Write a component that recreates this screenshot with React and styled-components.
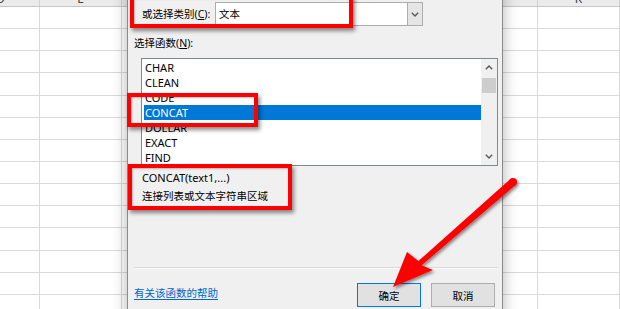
import React from "react";
import styled, { createGlobalStyle } from "styled-components";

const Global = createGlobalStyle`
  html, body { margin: 0; padding: 0; background: #fff; }
  body { font-family: "Noto Sans", "Noto Sans CJK SC", sans-serif; }
`;

const COLS = "40px 82px repeat(5, 83.2px) 1fr";

const Page = styled.div`
  position: relative;
  width: 620px;
  height: 309px;
  overflow: hidden;
  background: #fff;
  font-family: "Noto Sans", "Noto Sans CJK SC", sans-serif;
  color: #000;
`;

const Sheet = styled.div`
  display: flex;
  flex-direction: column;
`;

const HeaderRow = styled.div`
  display: grid;
  grid-template-columns: ${COLS};
  height: 15px;
  margin-top: -9px;
  background: #ebebeb;
  border-bottom: 1px solid #c6c6c6;
`;

const HeaderCell = styled.div`
  border-right: 1px solid #d2d2d2;
  font-size: 12px;
  line-height: 15px;
  color: #444;
  text-align: ${(p) => (p.$first ? "left" : "center")};
  text-indent: ${(p) => (p.$first ? "-4px" : "0")};
  overflow: hidden;
`;

const Row = styled.div`
  display: grid;
  grid-template-columns: ${COLS};
  height: 22.15px;
  box-sizing: border-box;
  border-bottom: 1px solid #dadada;
`;

const Cell = styled.div`
  border-right: 1px solid #dadada;
`;

const Dialog = styled.div`
  position: absolute;
  left: 127px;
  top: -10px;
  width: 376px;
  height: 340px;
  box-sizing: border-box;
  padding-top: 11px;
  background: #f0f0f0;
  border: 1px solid #8a8a8a;
  box-shadow: 0 0 14px rgba(0, 0, 0, 0.3);
  display: flex;
  flex-direction: column;
`;

const CategoryRow = styled.div`
  display: flex;
  align-items: center;
  height: 24px;
  padding-left: 14px;
`;

const CatLabel = styled.div`
  width: 73px;
  font-size: 10.5px;
  line-height: 14px;
  white-space: nowrap;
`;

const U = styled.span`
  text-decoration: underline;
  text-underline-offset: 1px;
`;

const Combo = styled.div`
  width: 208px;
  height: 24px;
  box-sizing: border-box;
  border: 1px solid #acacac;
  background: #fff;
  display: flex;
`;

const ComboText = styled.div`
  flex: 1;
  padding-left: 3px;
  font-size: 10.5px;
  line-height: 22px;
`;

const ComboButton = styled.div`
  width: 15px;
  box-sizing: border-box;
  border-left: 1px solid #adadad;
  background: #e5e5e5;
  display: flex;
  align-items: center;
  justify-content: center;
`;

const FuncLabel = styled.div`
  margin: 10px 0 0 6px;
  font-size: 10.5px;
  line-height: 14px;
`;

const ListBox = styled.div`
  margin: 8px 0 0 13px;
  width: 357px;
  height: 108px;
  box-sizing: border-box;
  border: 1px solid #828790;
  background: #fff;
  display: flex;
`;

const Items = styled.div`
  flex: 1;
  padding: 1px 0 0 2px;
  overflow: hidden;
`;

const Item = styled.div`
  height: 15px;
  line-height: 15px;
  padding-left: 1px;
  font-size: 11px;
  background: ${(p) => (p.$selected ? "#0078d7" : "transparent")};
  color: ${(p) => (p.$selected ? "#fff" : "#000")};
`;

const Scrollbar = styled.div`
  width: 16px;
  background: #f0f0f0;
  display: flex;
  flex-direction: column;
`;

const ScrollArrow = styled.div`
  height: 17px;
  display: flex;
  align-items: center;
  justify-content: center;
`;

const ScrollTrack = styled.div`
  flex: 1;
  padding: 2px 1px 0;
`;

const Thumb = styled.div`
  height: 15px;
  background: #cdcdcd;
`;

const Description = styled.div`
  margin-top: 2px;
  padding-left: 14px;
`;

const DescLine = styled.div`
  line-height: 19px;
  font-size: ${(p) => (p.$cjk ? "10.5px" : "11px")};
  white-space: nowrap;
`;

const Separator = styled.div`
  margin: 61px 0 0 6px;
  width: 364px;
  border-top: 1px solid #d9d9d9;
  border-bottom: 1px solid #fbfbfb;
`;

const Footer = styled.div`
  margin-top: 14px;
  padding: 0 7px 0 6px;
  display: flex;
  justify-content: space-between;
  align-items: flex-start;
`;

const HelpLink = styled.a`
  font-size: 10.5px;
  line-height: 20px;
  color: #0066cc;
  text-decoration: underline;
  text-underline-offset: 2px;
`;

const Buttons = styled.div`
  display: flex;
  gap: 10px;
`;

const Button = styled.div`
  width: 64px;
  height: 24px;
  box-sizing: border-box;
  background: #e1e1e1;
  border: 1px solid ${(p) => (p.$default ? "#0078d7" : "#adadad")};
  display: flex;
  align-items: center;
  justify-content: center;
  font-size: 10.5px;
`;

const RedBox = styled.div`
  position: absolute;
  left: ${(p) => p.$x}px;
  top: ${(p) => p.$y}px;
  width: ${(p) => p.$w}px;
  height: ${(p) => p.$h}px;
  box-sizing: border-box;
  border: 4px solid #ff0000;
  box-shadow: 2px 3px 4px rgba(0, 0, 0, 0.45), inset 1px 1px 2px rgba(0, 0, 0, 0.25);
  pointer-events: none;
`;

const ArrowLayer = styled.svg`
  position: absolute;
  left: 0;
  top: 0;
  pointer-events: none;
`;

const Chevron = ({ up }) => (
  <svg width="8" height="5" viewBox="0 0 8 5">
    <polyline
      points={up ? "0.8,4.2 4,1 7.2,4.2" : "0.8,0.8 4,4 7.2,0.8"}
      fill="none"
      stroke="#5a5a5a"
      strokeWidth="1.4"
    />
  </svg>
);

const headers = ["D", "E", "F", "G", "H", "I", "J", "K"];
const funcs = ["CHAR", "CLEAN", "CODE", "CONCAT", "DOLLAR", "EXACT", "FIND"];

export default function App() {
  return (
    <>
      <Global />
      <Page>
        <Sheet>
          <HeaderRow>
            {headers.map((h, i) => (
              <HeaderCell key={h} $first={i === 0}>
                {h}
              </HeaderCell>
            ))}
          </HeaderRow>
          {Array.from({ length: 14 }).map((_, r) => (
            <Row key={r}>
              {headers.map((h) => (
                <Cell key={h} />
              ))}
            </Row>
          ))}
        </Sheet>

        <Dialog>
          <CategoryRow>
            <CatLabel>
              或选择类别(<U>C</U>):
            </CatLabel>
            <Combo>
              <ComboText>文本</ComboText>
              <ComboButton>
                <Chevron />
              </ComboButton>
            </Combo>
          </CategoryRow>

          <FuncLabel>
            选择函数(<U>N</U>):
          </FuncLabel>

          <ListBox>
            <Items>
              {funcs.map((f) => (
                <Item key={f} $selected={f === "CONCAT"}>
                  {f}
                </Item>
              ))}
            </Items>
            <Scrollbar>
              <ScrollArrow>
                <Chevron up />
              </ScrollArrow>
              <ScrollTrack>
                <Thumb />
              </ScrollTrack>
              <ScrollArrow>
                <Chevron />
              </ScrollArrow>
            </Scrollbar>
          </ListBox>

          <Description>
            <DescLine>CONCAT(text1,...)</DescLine>
            <DescLine $cjk>连接列表或文本字符串区域</DescLine>
          </Description>

          <Separator />

          <Footer>
            <HelpLink>有关该函数的帮助</HelpLink>
            <Buttons>
              <Button $default>确定</Button>
              <Button>取消</Button>
            </Buttons>
          </Footer>
        </Dialog>

        <RedBox $x={130} $y={-6} $w={223} $h={34} />
        <RedBox $x={127} $y={93} $w={131} $h={34} />
        <RedBox $x={128} $y={164} $w={164} $h={46} />

        <ArrowLayer width="620" height="309" viewBox="0 0 620 309">
          <defs>
            <filter id="arrowShadow" x="-20%" y="-20%" width="140%" height="140%">
              <feDropShadow dx="1.5" dy="2" stdDeviation="1.5" floodColor="#000" floodOpacity="0.45" />
            </filter>
          </defs>
          <g filter="url(#arrowShadow)" fill="#ff0000">
            <polygon points="510.4,179 418.4,261.1 407,252 393,287 433,270 421.6,265.3 515.6,185" />
            <circle cx="513" cy="182" r="4" />
          </g>
        </ArrowLayer>
      </Page>
    </>
  );
}
